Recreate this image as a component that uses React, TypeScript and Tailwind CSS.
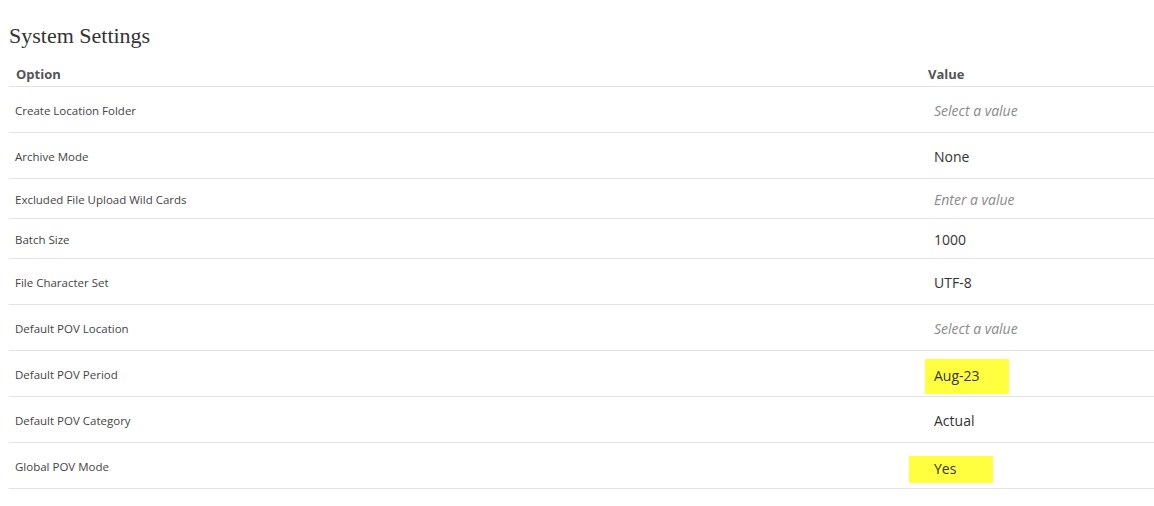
const rows: { label: string; value: string; kind: "text" | "placeholder"; mark?: "period" | "mode"; h: string }[] = [
  { label: "Create Location Folder", value: "Select a value", kind: "placeholder", h: "h-[46px]" },
  { label: "Archive Mode", value: "None", kind: "text", h: "h-[46px]" },
  { label: "Excluded File Upload Wild Cards", value: "Enter a value", kind: "placeholder", h: "h-[40px]" },
  { label: "Batch Size", value: "1000", kind: "text", h: "h-[40px]" },
  { label: "File Character Set", value: "UTF-8", kind: "text", h: "h-[46px]" },
  { label: "Default POV Location", value: "Select a value", kind: "placeholder", h: "h-[46px]" },
  { label: "Default POV Period", value: "Aug-23", kind: "text", mark: "period", h: "h-[46px]" },
  { label: "Default POV Category", value: "Actual", kind: "text", h: "h-[46px]" },
  { label: "Global POV Mode", value: "Yes", kind: "text", mark: "mode", h: "h-[46px]" },
];

function ValueCell({ value, kind, mark }: { value: string; kind: string; mark?: string }) {
  // yellow marks are highlighter annotations on the screenshot
  if (mark === "period") {
    return (
      <span className="mt-[4px] ml-[5px] flex h-[35px] w-[84px] items-center bg-[#ffff40] pb-[3px] pl-[9px] text-[14px] text-[#333]">
        {value}
      </span>
    );
  }
  if (mark === "mode") {
    return (
      <span className="mt-[6px] -ml-[11px] flex h-[27px] w-[84px] items-center bg-[#ffff40] pb-[3px] pl-[25px] text-[14px] text-[#333]">
        {value}
      </span>
    );
  }
  return (
    <span
      className={
        kind === "placeholder"
          ? "pl-[14px] text-[14px] italic text-[#8a8a8a]"
          : "pl-[14px] text-[14px] text-[#333]"
      }
    >
      {value}
    </span>
  );
}

export default function App() {
  return (
    <div className="min-h-[506px] w-full bg-white pl-[9px] font-['Open_Sans',sans-serif]">
      <h1 className="pt-[23px] font-['Liberation_Serif',serif] text-[22px] leading-[26px] text-[#333]">
        System Settings
      </h1>
      <div className="mt-[6px]">
        <div className="grid h-[32px] grid-cols-[911px_1fr] items-end border-b border-[#e3e3e3] pb-[3px] text-[13px] leading-[18px] font-bold text-[#555]">
          <span className="pl-[7px]">Option</span>
          <span className="pl-[8px]">Value</span>
        </div>
        {rows.map((r) => (
          <div
            key={r.label}
            className={`grid grid-cols-[911px_1fr] items-center border-b border-[#e3e3e3] pt-[2px] ${r.h}`}
          >
            <span className="pl-[6px] text-[11.5px] text-[#444]">{r.label}</span>
            <div className="flex items-center">
              <ValueCell value={r.value} kind={r.kind} mark={r.mark} />
            </div>
          </div>
        ))}
      </div>
    </div>
  );
}
